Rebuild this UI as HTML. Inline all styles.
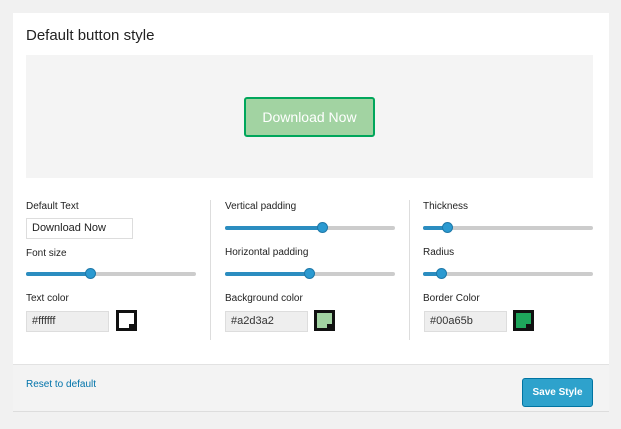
<!DOCTYPE html>
<html><head><style>
*{box-sizing:border-box;margin:0;padding:0}
body{width:621px;height:429px;background:#f1f1f1;font-family:"Liberation Sans",sans-serif;position:relative;overflow:hidden;color:#222}
.a{position:absolute}
.panel{left:13px;top:13px;width:596px;height:351px;background:#fff}
.foot{left:13px;top:364px;width:596px;height:48px;background:#f3f3f3;border-top:1px solid #e2e2e2;border-bottom:1px solid #ddd}
.lbl{font-size:10px;color:#222}
.inp{height:21px;border:1px solid #ddd;font-size:11px;padding:0 5px;line-height:19px;color:#333}
.track{height:4px;background:#ccc;border-radius:2px}
.fill{height:4px;background:#2b8dc0;border-radius:2px;top:0;left:0}
.thumb{width:11px;height:11px;border-radius:50%;background:#2b9ad1;border:1px solid #1e78a8;top:-4px}
.sw{width:21px;height:21px;background:#111;padding:3px}
.sw div{width:15px;height:15px}
.sw span{position:absolute;right:3px;bottom:3px;width:5px;height:4px;background:#111}
.div{width:1px;background:#ddd;top:200px;height:140px}
</style></head><body>
<div class="a panel"></div>
<div class="a foot"></div>
<div class="a" style="left:26px;top:27px;font-size:15px;color:#222">Default button style</div>
<div class="a" style="left:26px;top:55px;width:567px;height:123px;background:#f4f4f4"></div>
<div class="a" style="left:244px;top:97px;width:131px;height:40px;background:#a2d3a2;border:2px solid #00a65b;border-radius:3px;color:#fff;font-size:14px;text-align:center;line-height:36px">Download Now</div>
<div class="a div" style="left:210px"></div>
<div class="a div" style="left:409px"></div>

<div class="a lbl" style="left:26px;top:201px">Default Text</div>
<div class="a inp" style="left:26px;top:218px;width:107px;background:#fff;color:#222">Download Now</div>
<div class="a lbl" style="left:26px;top:248px">Font size</div>
<div class="a track" style="left:26px;top:272px;width:170px"><div class="a fill" style="width:64px"></div><div class="a thumb" style="left:59px"></div></div>
<div class="a lbl" style="left:26px;top:293px">Text color</div>
<div class="a inp" style="left:26px;top:311px;width:83px;background:#eee">#ffffff</div>
<div class="a sw" style="left:116px;top:310px"><div style="background:#fff"></div><span></span></div>

<div class="a lbl" style="left:225px;top:201px">Vertical padding</div>
<div class="a track" style="left:225px;top:226px;width:170px"><div class="a fill" style="width:97px"></div><div class="a thumb" style="left:92px"></div></div>
<div class="a lbl" style="left:225px;top:247px">Horizontal padding</div>
<div class="a track" style="left:225px;top:272px;width:170px"><div class="a fill" style="width:84px"></div><div class="a thumb" style="left:79px"></div></div>
<div class="a lbl" style="left:225px;top:293px">Background color</div>
<div class="a inp" style="left:225px;top:311px;width:83px;background:#eee">#a2d3a2</div>
<div class="a sw" style="left:314px;top:310px"><div style="background:#a2d3a2"></div><span></span></div>

<div class="a lbl" style="left:423px;top:201px">Thickness</div>
<div class="a track" style="left:423px;top:226px;width:170px"><div class="a fill" style="width:24px"></div><div class="a thumb" style="left:19px"></div></div>
<div class="a lbl" style="left:423px;top:247px">Radius</div>
<div class="a track" style="left:423px;top:272px;width:170px"><div class="a fill" style="width:18px"></div><div class="a thumb" style="left:13px"></div></div>
<div class="a lbl" style="left:423px;top:293px">Border Color</div>
<div class="a inp" style="left:424px;top:311px;width:83px;background:#eee">#00a65b</div>
<div class="a sw" style="left:513px;top:310px"><div style="background:#1ea65b"></div><span></span></div>

<div class="a" style="left:26px;top:379px;font-size:10px;color:#0073aa">Reset to default</div>
<div class="a" style="left:522px;top:378px;width:71px;height:29px;background:#2ea2cc;border:1px solid #0074a2;border-radius:3px;color:#fff;font-size:10px;font-weight:bold;text-align:center;line-height:27px">Save Style</div>
</body></html>
